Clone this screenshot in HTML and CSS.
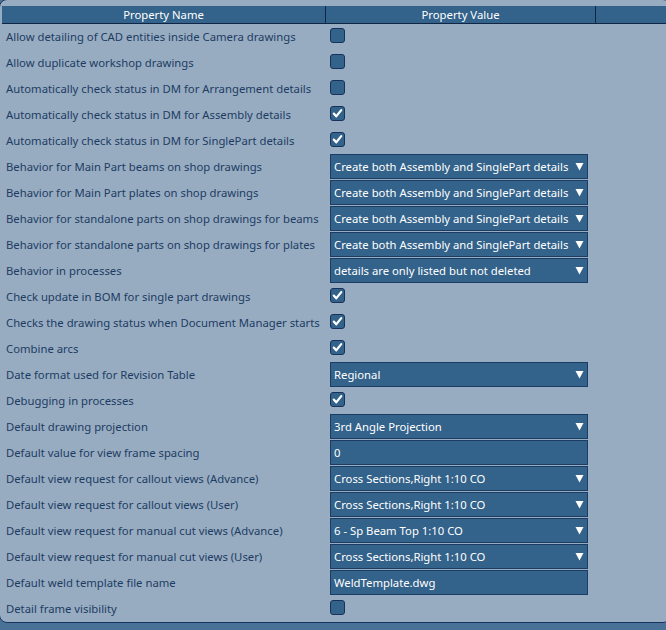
FILE: index.html
```html
<!DOCTYPE html>
<html>
<head>
<meta charset="utf-8">
<link rel="stylesheet" href="styles.css">
</head>
<body>
<div class="panel">
  <div class="grid head">
    <div class="hcell">Property Name</div>
    <div class="hcell">Property Value</div>
    <div class="hcell last"></div>
  </div>
  <div class="rows">
    <div class="grid row"><div class="label">Allow detailing of CAD entities inside Camera drawings</div><div class="val"><span class="cb"></span></div></div>
    <div class="grid row"><div class="label">Allow duplicate workshop drawings</div><div class="val"><span class="cb"></span></div></div>
    <div class="grid row"><div class="label">Automatically check status in DM for Arrangement details</div><div class="val"><span class="cb"></span></div></div>
    <div class="grid row"><div class="label">Automatically check status in DM for Assembly details</div><div class="val"><span class="cb on"><svg viewBox="0 0 15 15"><path d="M3.2 7.6 L6 10.8 L11.8 3.6" /></svg></span></div></div>
    <div class="grid row"><div class="label">Automatically check status in DM for SinglePart details</div><div class="val"><span class="cb on"><svg viewBox="0 0 15 15"><path d="M3.2 7.6 L6 10.8 L11.8 3.6" /></svg></span></div></div>
    <div class="grid row"><div class="label">Behavior for Main Part beams on shop drawings</div><div class="val"><div class="box dd"><span>Create both Assembly and SinglePart details</span><svg class="arr" viewBox="0 0 9 9"><polygon points="0.5,1 8.5,1 4.5,8.5"/></svg></div></div></div>
    <div class="grid row"><div class="label">Behavior for Main Part plates on shop drawings</div><div class="val"><div class="box dd"><span>Create both Assembly and SinglePart details</span><svg class="arr" viewBox="0 0 9 9"><polygon points="0.5,1 8.5,1 4.5,8.5"/></svg></div></div></div>
    <div class="grid row"><div class="label">Behavior for standalone parts on shop drawings for beams</div><div class="val"><div class="box dd"><span>Create both Assembly and SinglePart details</span><svg class="arr" viewBox="0 0 9 9"><polygon points="0.5,1 8.5,1 4.5,8.5"/></svg></div></div></div>
    <div class="grid row"><div class="label">Behavior for standalone parts on shop drawings for plates</div><div class="val"><div class="box dd"><span>Create both Assembly and SinglePart details</span><svg class="arr" viewBox="0 0 9 9"><polygon points="0.5,1 8.5,1 4.5,8.5"/></svg></div></div></div>
    <div class="grid row"><div class="label">Behavior in processes</div><div class="val"><div class="box dd"><span>details are only listed but not deleted</span><svg class="arr" viewBox="0 0 9 9"><polygon points="0.5,1 8.5,1 4.5,8.5"/></svg></div></div></div>
    <div class="grid row"><div class="label">Check update in BOM for single part drawings</div><div class="val"><span class="cb on"><svg viewBox="0 0 15 15"><path d="M3.2 7.6 L6 10.8 L11.8 3.6" /></svg></span></div></div>
    <div class="grid row"><div class="label">Checks the drawing status when Document Manager starts</div><div class="val"><span class="cb on"><svg viewBox="0 0 15 15"><path d="M3.2 7.6 L6 10.8 L11.8 3.6" /></svg></span></div></div>
    <div class="grid row"><div class="label">Combine arcs</div><div class="val"><span class="cb on"><svg viewBox="0 0 15 15"><path d="M3.2 7.6 L6 10.8 L11.8 3.6" /></svg></span></div></div>
    <div class="grid row"><div class="label">Date format used for Revision Table</div><div class="val"><div class="box dd"><span>Regional</span><svg class="arr" viewBox="0 0 9 9"><polygon points="0.5,1 8.5,1 4.5,8.5"/></svg></div></div></div>
    <div class="grid row"><div class="label">Debugging in processes</div><div class="val"><span class="cb on"><svg viewBox="0 0 15 15"><path d="M3.2 7.6 L6 10.8 L11.8 3.6" /></svg></span></div></div>
    <div class="grid row"><div class="label">Default drawing projection</div><div class="val"><div class="box dd"><span>3rd Angle Projection</span><svg class="arr" viewBox="0 0 9 9"><polygon points="0.5,1 8.5,1 4.5,8.5"/></svg></div></div></div>
    <div class="grid row"><div class="label">Default value for view frame spacing</div><div class="val"><div class="box"><span>0</span></div></div></div>
    <div class="grid row"><div class="label">Default view request for callout views (Advance)</div><div class="val"><div class="box dd"><span>Cross Sections,Right 1:10 CO</span><svg class="arr" viewBox="0 0 9 9"><polygon points="0.5,1 8.5,1 4.5,8.5"/></svg></div></div></div>
    <div class="grid row"><div class="label">Default view request for callout views (User)</div><div class="val"><div class="box dd"><span>Cross Sections,Right 1:10 CO</span><svg class="arr" viewBox="0 0 9 9"><polygon points="0.5,1 8.5,1 4.5,8.5"/></svg></div></div></div>
    <div class="grid row"><div class="label">Default view request for manual cut views (Advance)</div><div class="val"><div class="box dd"><span>6 - Sp Beam Top 1:10 CO</span><svg class="arr" viewBox="0 0 9 9"><polygon points="0.5,1 8.5,1 4.5,8.5"/></svg></div></div></div>
    <div class="grid row"><div class="label">Default view request for manual cut views (User)</div><div class="val"><div class="box dd"><span>Cross Sections,Right 1:10 CO</span><svg class="arr" viewBox="0 0 9 9"><polygon points="0.5,1 8.5,1 4.5,8.5"/></svg></div></div></div>
    <div class="grid row"><div class="label">Default weld template file name</div><div class="val"><div class="box"><span>WeldTemplate.dwg</span></div></div></div>
    <div class="grid row"><div class="label">Detail frame visibility</div><div class="val"><span class="cb"></span></div></div>
  </div>
</div>
</body>
</html>
```
FILE: styles.css
```css
html, body {
  margin: 0;
  padding: 0;
}
body {
  background: #4a7298;
  width: 666px;
  height: 630px;
  overflow: hidden;
  font-family: "Noto Sans", "Open Sans", sans-serif;
  font-size: 11.3px;
}
.panel {
  margin: -1px 0 0 -1px;
  width: 672px;
  height: 624px;
  box-sizing: border-box;
  padding: 6px 0 0 2px;
  background: #98acc1;
  border: 1px solid #17325a;
  border-radius: 8px;
}
.grid {
  display: grid;
  grid-template-columns: 324px 270px 1fr;
}
.head {
  height: 18px;
  box-sizing: border-box;
  background: #33628a;
  border-bottom: 1px solid #0f2646;
  color: #ffffff;
}
.hcell {
  text-align: center;
  line-height: 17px;
  border-right: 1px solid #0f2646;
}
.hcell.last {
  border-right: none;
}
.row {
  height: 26px;
}
.label {
  padding-left: 4px;
  color: #1d3c63;
  line-height: 25px;
  white-space: nowrap;
}
.val {
  padding-left: 4px;
  display: flex;
  align-items: flex-start;
}
.cb {
  display: block;
  margin-top: 4px;
  width: 15px;
  height: 15px;
  box-sizing: border-box;
  border: 1px solid #17325a;
  border-radius: 3px;
  background: #33628a;
}
.cb svg {
  display: block;
  width: 13px;
  height: 13px;
}
.cb svg path {
  fill: none;
  stroke: #ffffff;
  stroke-width: 2.6;
  stroke-linecap: round;
  stroke-linejoin: round;
}
.box {
  width: 258px;
  height: 25px;
  box-sizing: border-box;
  background: #33628a;
  border: 1px solid #1b3d63;
  color: #ffffff;
  display: flex;
  align-items: center;
  justify-content: space-between;
  padding: 0 3px 0 3px;
  white-space: nowrap;
}
.arr {
  width: 9px;
  height: 9px;
  fill: #ffffff;
}
```
